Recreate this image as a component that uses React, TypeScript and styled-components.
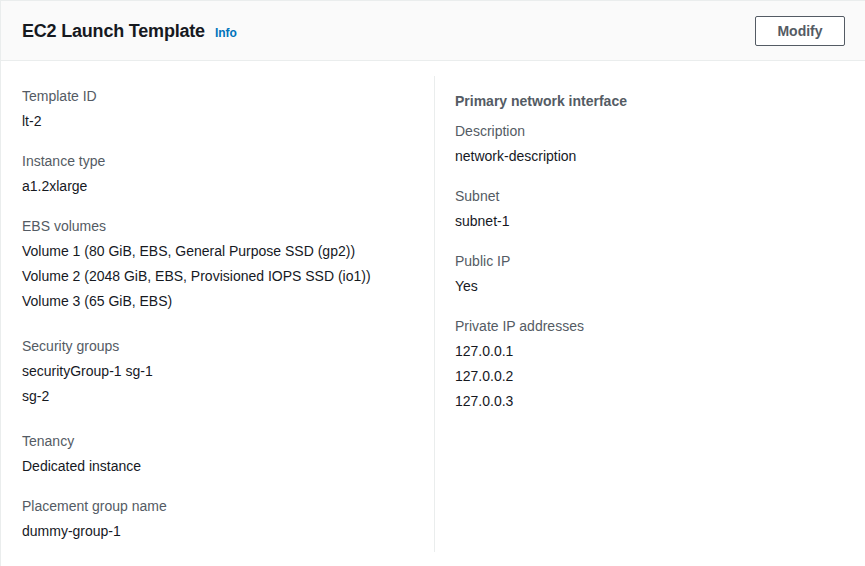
import React from "react";
import styled, { createGlobalStyle } from "styled-components";

const GlobalStyle = createGlobalStyle`
  html, body {
    margin: 0;
    padding: 0;
    background: #ffffff;
    overflow: hidden;
  }
  body {
    font-family: "Liberation Sans", Arial, sans-serif;
    font-size: 14px;
    color: #16191f;
  }
`;

const Container = styled.section`
  width: 868px;
  height: 566px;
  box-sizing: border-box;
  border: 1px solid #eaeded;
  border-bottom: none;
  background: #ffffff;
`;

const Header = styled.header`
  height: 59px;
  display: flex;
  align-items: center;
  justify-content: space-between;
  padding: 0 22px 0 21px;
  background: #fafafa;
  border-bottom: 1px solid #eaeded;
`;

const TitleRow = styled.div`
  display: flex;
  align-items: baseline;
  gap: 10px;
`;

const Title = styled.h2`
  margin: 0;
  font-size: 18px;
  font-weight: 700;
  letter-spacing: -0.2px;
  color: #16191f;
  line-height: 22px;
`;

const InfoLink = styled.a`
  font-size: 12px;
  font-weight: 700;
  color: #0073bb;
  text-decoration: none;
  cursor: pointer;
`;

const Button = styled.button`
  width: 90px;
  height: 30px;
  border: 1px solid #545b64;
  border-radius: 2px;
  background: #ffffff;
  color: #545b64;
  font-family: inherit;
  font-size: 14px;
  font-weight: 700;
  cursor: pointer;
`;

const Body = styled.div`
  display: grid;
  grid-template-columns: 412px 1fr;
  padding: 15px 20px 15px 21px;
`;

const Column = styled.div<{ $divider?: boolean }>`
  padding: 8px 20px 8px ${(p) => (p.$divider ? "20px" : "0")};
  border-left: ${(p) => (p.$divider ? "1px solid #eaeded" : "none")};
`;

const SectionTitle = styled.h3`
  margin: 5px 0 5px;
  font-size: 14px;
  font-weight: 700;
  line-height: 25px;
  color: #545b64;
`;

const Item = styled.div<{ $list?: boolean }>`
  margin-bottom: ${(p) => (p.$list ? "20px" : "15px")};
  &:last-child {
    margin-bottom: 0;
  }
`;

const Label = styled.div`
  line-height: 25px;
  color: #545b64;
`;

const Value = styled.div`
  line-height: 25px;
  color: #16191f;
`;

type Field = { label: string; values: string[] };

const leftFields: Field[] = [
  { label: "Template ID", values: ["lt-2"] },
  { label: "Instance type", values: ["a1.2xlarge"] },
  {
    label: "EBS volumes",
    values: [
      "Volume 1 (80 GiB, EBS, General Purpose SSD (gp2))",
      "Volume 2 (2048 GiB, EBS, Provisioned IOPS SSD (io1))",
      "Volume 3 (65 GiB, EBS)",
    ],
  },
  { label: "Security groups", values: ["securityGroup-1 sg-1", "sg-2"] },
  { label: "Tenancy", values: ["Dedicated instance"] },
  { label: "Placement group name", values: ["dummy-group-1"] },
];

const rightFields: Field[] = [
  { label: "Description", values: ["network-description"] },
  { label: "Subnet", values: ["subnet-1"] },
  { label: "Public IP", values: ["Yes"] },
  {
    label: "Private IP addresses",
    values: ["127.0.0.1", "127.0.0.2", "127.0.0.3"],
  },
];

const FieldList = ({ fields }: { fields: Field[] }) => (
  <>
    {fields.map((f) => (
      <Item key={f.label} $list={f.values.length > 1}>
        <Label>{f.label}</Label>
        {f.values.map((v) => (
          <Value key={v}>{v}</Value>
        ))}
      </Item>
    ))}
  </>
);

const App = () => {
  return (
    <>
      <GlobalStyle />
      <Container>
        <Header>
          <TitleRow>
            <Title>EC2 Launch Template</Title>
            <InfoLink>Info</InfoLink>
          </TitleRow>
          <Button>Modify</Button>
        </Header>
        <Body>
          <Column>
            <FieldList fields={leftFields} />
          </Column>
          <Column $divider>
            <SectionTitle>Primary network interface</SectionTitle>
            <FieldList fields={rightFields} />
          </Column>
        </Body>
      </Container>
    </>
  );
};

export default App;
